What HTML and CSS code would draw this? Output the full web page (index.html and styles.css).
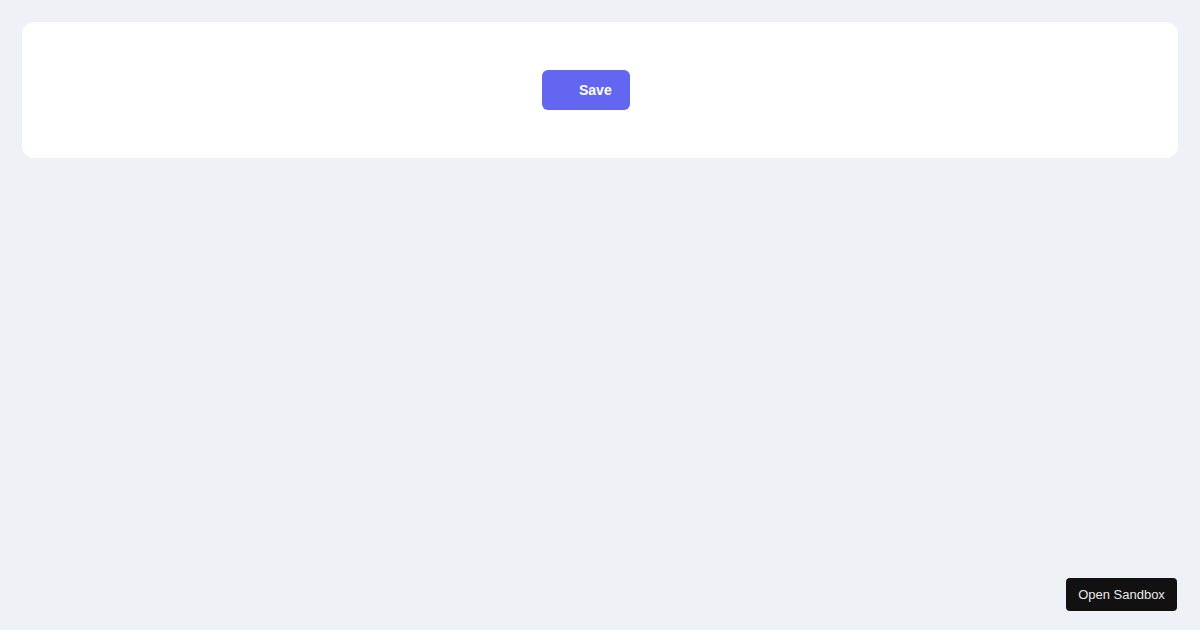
FILE: index.html
```html
<!DOCTYPE html>
<html lang="en">
<head>
<meta charset="utf-8">
<title>Save</title>
<link rel="stylesheet" href="styles.css">
</head>
<body>
<main class="page">
  <section class="card">
    <button class="save-btn" type="button"><span class="icon-slot"></span><span>Save</span></button>
  </section>
</main>
<a class="sandbox-btn" href="#">Open Sandbox</a>
</body>
</html>
```
FILE: styles.css
```css
* { box-sizing: border-box; }
html, body { margin: 0; padding: 0; }
body {
  background: #eef1f6;
  font-family: "Liberation Sans", Arial, sans-serif;
  width: 1200px;
  height: 630px;
  overflow: hidden;
}
.page {
  padding: 22px;
}
.card {
  background: #ffffff;
  border-radius: 12px;
  padding: 48px 20px;
  display: flex;
  justify-content: center;
  align-items: center;
}
.save-btn {
  margin-right: 28px;
  height: 40px;
  width: 88px;
  border: none;
  border-radius: 6px;
  background: #6366f1;
  color: #ffffff;
  font-family: "Liberation Sans", Arial, sans-serif;
  font-weight: 700;
  font-size: 14px;
  display: flex;
  align-items: center;
  padding: 0 0 0 16px;
  gap: 5px;
  cursor: pointer;
}
.icon-slot {
  width: 16px;
  height: 16px;
  display: inline-block;
}
.sandbox-btn {
  position: fixed;
  right: 23px;
  bottom: 19px;
  width: 111px;
  height: 33px;
  background: #111111;
  color: #e8e8e8;
  border-radius: 4px;
  font-size: 13px;
  text-decoration: none;
  display: flex;
  align-items: center;
  justify-content: center;
}
```
